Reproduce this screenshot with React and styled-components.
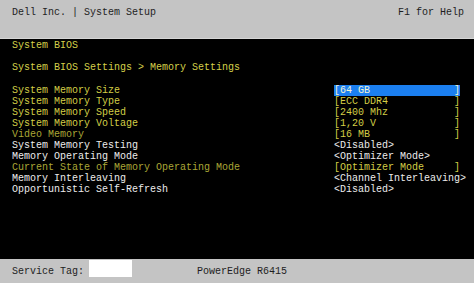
import React from 'react'
import styled, { createGlobalStyle } from 'styled-components'

const GlobalStyle = createGlobalStyle`
  html, body {
    margin: 0;
    padding: 0;
    background: #000;
  }
  body {
    font-family: "Liberation Mono", "DejaVu Sans Mono", monospace;
    font-size: 10px;
  }
`

const Screen = styled.div`
  width: 474px;
  height: 283px;
  display: flex;
  flex-direction: column;
  background: #000;
  overflow: hidden;
`

const TopBar = styled.div`
  height: 39px;
  flex: none;
  box-sizing: border-box;
  background: #c4c4c4;
  border-bottom: 1px solid #d6d6d6;
  color: #1e1e1e;
  display: flex;
  justify-content: space-between;
  align-items: flex-start;
  padding: 7px 10px 0 12px;
  line-height: 11px;
`

const Body = styled.div`
  flex: 1;
  padding: 0 12px;
  display: flex;
  flex-direction: column;
`

const Crumb = styled.div`
  color: #d4d04a;
  line-height: 11px;
  margin-top: ${(p) => p.$top}px;
`

const List = styled.div`
  margin-top: 12px;
  display: grid;
  grid-template-columns: 322px 126px;
  grid-auto-rows: 11px;
  line-height: 11px;
`

const tone = {
  yellow: '#d2ce46',
  olive: '#aaa636',
  white: '#ececec',
}

const Label = styled.div`
  color: ${(p) => tone[p.$tone]};
  white-space: pre;
`

const Value = styled.div`
  color: ${(p) => (p.$selected ? '#f4f4d0' : tone[p.$tone])};
  background: ${(p) => (p.$selected ? '#1b7ff0' : 'transparent')};
  white-space: pre;
`

const Footer = styled.div`
  height: 24px;
  flex: none;
  background: #c4c4c4;
  color: #1e1e1e;
  display: flex;
  align-items: center;
  padding-left: 12px;
  line-height: 11px;
`

const TagBox = styled.div`
  width: 43px;
  height: 17px;
  background: #fff;
  margin: -6px 0 0 5px;
  align-self: center;
`

const Model = styled.span`
  margin-left: 65px;
`

const pad = (s) => '[' + s.padEnd(19, ' ') + ']'

const rows = [
  { label: 'System Memory Size', value: pad('64 GB'), tone: 'yellow', selected: true },
  { label: 'System Memory Type', value: pad('ECC DDR4'), tone: 'yellow' },
  { label: 'System Memory Speed', value: pad('2400 Mhz'), tone: 'yellow' },
  { label: 'System Memory Voltage', value: pad('1,20 V'), tone: 'yellow' },
  { label: 'Video Memory', value: pad('16 MB'), tone: 'olive', valueTone: 'yellow' },
  { label: 'System Memory Testing', value: '<Disabled>', tone: 'white' },
  { label: 'Memory Operating Mode', value: '<Optimizer Mode>', tone: 'white' },
  { label: 'Current State of Memory Operating Mode', value: pad('Optimizer Mode'), tone: 'olive', valueTone: 'yellow' },
  { label: 'Memory Interleaving', value: '<Channel Interleaving>', tone: 'white' },
  { label: 'Opportunistic Self-Refresh', value: '<Disabled>', tone: 'white' },
]

const App = () => {
  return (
    <Screen>
      <GlobalStyle />
      <TopBar>
        <span>Dell Inc. | System Setup</span>
        <span>F1 for Help</span>
      </TopBar>
      <Body>
        <Crumb $top={1}>System BIOS</Crumb>
        <Crumb $top={11}>System BIOS Settings &gt; Memory Settings</Crumb>
        <List>
          {rows.map((r) => (
            <React.Fragment key={r.label}>
              <Label $tone={r.tone}>{r.label}</Label>
              <Value $tone={r.valueTone || r.tone} $selected={r.selected}>{r.value}</Value>
            </React.Fragment>
          ))}
        </List>
      </Body>
      <Footer>
        <span>Service Tag:</span>
        <TagBox />
        <Model>PowerEdge R6415</Model>
      </Footer>
    </Screen>
  )
}

export default App
